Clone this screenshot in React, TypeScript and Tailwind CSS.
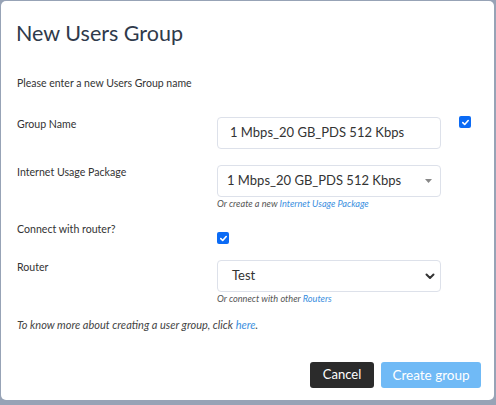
import React from "react";

const font = { fontFamily: "Lato, 'Open Sans', sans-serif" };

function Check() {
  return (
    <span className="flex h-[12px] w-[12px] items-center justify-center rounded-[2px] bg-[#0b6bf5]">
      <svg width="9" height="9" viewBox="0 0 10 10">
        <path d="M2 5.2 L4.1 7.2 L8 2.8" fill="none" stroke="white" strokeWidth="1.8" strokeLinecap="round" strokeLinejoin="round" />
      </svg>
    </span>
  );
}

export default function App() {
  return (
    <div className="h-[405px] w-[496px] bg-[#97a3b6] pl-[1px] pt-[1px]" style={font}>
      <div className="flex h-[399px] w-[493px] flex-col rounded-[5px] bg-white text-[#333]">
        <div className="px-[15px] pt-[18px] text-[21.5px] leading-[28px] text-[#2f3a4b]">New Users Group</div>
        <div className="px-[16px] pt-[28px] text-[10.5px] leading-[16px]">Please enter a new Users Group name</div>

        <div className="mt-[26px] flex px-[16px]">
          <div className="w-[200px] text-[10.6px] leading-[14px]">Group Name</div>
          <div className="flex h-[32px] w-[224px] items-center rounded-[4px] border border-[#dde1ea] pl-[12px] text-[13px]">1 Mbps_20 GB_PDS 512 Kbps</div>
          <div className="ml-[18px] -mt-[1px] flex"><Check /></div>
        </div>

        <div className="mt-[16px] flex px-[16px]">
          <div className="w-[200px] text-[10.6px] leading-[14px]">Internet Usage Package</div>
          <div className="flex flex-col">
            <div className="flex h-[32px] w-[224px] items-center justify-between rounded-[4px] border border-[#dde1ea] pl-[9px] pr-[8px] text-[13px]">
              <span>1 Mbps_20 GB_PDS 512 Kbps</span>
              <svg width="7" height="4" viewBox="0 0 7 4"><path d="M0 0 L7 0 L3.5 4 Z" fill="#888" /></svg>
            </div>
            <div className="pt-[1px] text-[9.2px] italic leading-[12px] text-[#555]">
              Or create a new <span className="text-[#3b8fe0]">Internet Usage Package</span>
            </div>
          </div>
        </div>

        <div className="mt-[12px] flex px-[16px]">
          <div className="w-[200px] text-[10.6px] leading-[14px]">Connect with router?</div>
          <div className="flex pt-[10px]"><Check /></div>
        </div>

        <div className="mt-[16px] flex px-[16px]">
          <div className="w-[200px] text-[10.6px] leading-[14px]">Router</div>
          <div className="flex flex-col">
            <div className="flex h-[32px] w-[224px] items-center justify-between rounded-[4px] border border-[#dde1ea] pl-[14px] pr-[5px] text-[13px]">
              <span>Test</span>
              <svg width="10" height="7" viewBox="0 0 10 7"><path d="M1.5 1.5 L5 5 L8.5 1.5" fill="none" stroke="#333" strokeWidth="2" strokeLinecap="round" strokeLinejoin="round" /></svg>
            </div>
            <div className="pt-[1px] text-[9.2px] italic leading-[12px] text-[#555]">
              Or connect with other <span className="text-[#3b8fe0]">Routers</span>
            </div>
          </div>
        </div>

        <div className="mt-[13px] px-[16px] text-[11px] italic leading-[14px] text-[#444]">
          To know more about creating a user group, click <span className="text-[#3b8fe0]">here</span>.
        </div>

        <div className="mt-auto flex justify-end gap-[7px] pb-[12px] pr-[13px]">
          <button className="h-[26px] w-[64px] rounded-[3px] bg-[#2b2b2b] text-[13px] text-white">Cancel</button>
          <button className="h-[26px] w-[100px] rounded-[3px] bg-[#70baf6] text-[13.5px] text-white">Create group</button>
        </div>
      </div>
    </div>
  );
}
